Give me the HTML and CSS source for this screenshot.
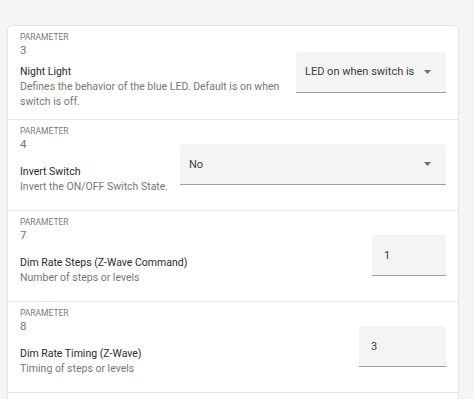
FILE: index.html
```html
<!DOCTYPE html>
<html>
<head>
<meta charset="utf-8">
<link rel="stylesheet" href="styles.css">
</head>
<body>
<div class="page">
  <div class="card">
    <div class="row">
      <div class="info">
        <div class="label">Parameter</div>
        <div class="num">3</div>
        <div class="body">
          <div class="title">Night Light</div>
          <div class="desc">Defines the behavior of the blue LED. Default is on when switch is off.</div>
        </div>
      </div>
      <div class="field select sel-led">
        <span class="value">LED on when switch is</span>
        <svg class="arrow" width="7" height="4" viewBox="0 0 7 4"><path d="M0 0 L7 0 L3.5 4 Z" fill="#6e6e6e"/></svg>
      </div>
    </div>
    <div class="row">
      <div class="info">
        <div class="label">Parameter</div>
        <div class="num">4</div>
        <div class="body">
          <div class="title">Invert Switch</div>
          <div class="desc">Invert the ON/OFF Switch State.</div>
        </div>
      </div>
      <div class="field select sel-no">
        <span class="value">No</span>
        <svg class="arrow" width="7" height="4" viewBox="0 0 7 4"><path d="M0 0 L7 0 L3.5 4 Z" fill="#6e6e6e"/></svg>
      </div>
    </div>
    <div class="row">
      <div class="info">
        <div class="label">Parameter</div>
        <div class="num">7</div>
        <div class="body">
          <div class="title">Dim Rate Steps (Z-Wave Command)</div>
          <div class="desc">Number of steps or levels</div>
        </div>
      </div>
      <div class="field input in-small">
        <span class="value">1</span>
      </div>
    </div>
    <div class="row">
      <div class="info">
        <div class="label">Parameter</div>
        <div class="num">8</div>
        <div class="body">
          <div class="title">Dim Rate Timing (Z-Wave)</div>
          <div class="desc">Timing of steps or levels</div>
        </div>
      </div>
      <div class="field input in-wide">
        <span class="value">3</span>
      </div>
    </div>
    <div class="spacer"></div>
  </div>
</div>
</body>
</html>
```

FILE: styles.css
```css
html, body {
  margin: 0;
  padding: 0;
  background: #f5f5f5;
  font-family: Roboto, "Noto Sans", Arial, sans-serif;
  overflow: hidden;
}
.page {
  padding: 25px 15px 0 7px;
  height: 399px;
  box-sizing: border-box;
  overflow: hidden;
}
.card {
  background: #fff;
  border: 1px solid #e4e4e4;
  border-radius: 5px 5px 0 0;
  width: 452px;
  box-sizing: border-box;
}
.row {
  display: flex;
  align-items: center;
  padding: 5px 12px 10px 12px;
  border-bottom: 1px solid #e6e6e6;
}
.spacer {
  height: 20px;
}
.info {
  flex: 1;
  min-width: 0;
}
.label {
  font-size: 8.5px;
  line-height: 12px;
  text-transform: uppercase;
  color: #7a7a7a;
}
.num {
  font-size: 11.5px;
  line-height: 15px;
  color: #737373;
}
.body {
  margin-top: 6px;
  min-height: 42px;
  display: flex;
  flex-direction: column;
  justify-content: center;
}
.title {
  font-size: 10.5px;
  line-height: 15px;
  color: #2a2a2a;
}
.desc {
  font-size: 10.5px;
  line-height: 15px;
  color: #777;
}
.field {
  margin-top: 4px;
  height: 41px;
  box-sizing: border-box;
  background: #f4f4f4;
  border-bottom: 1px solid #a0a0a0;
  border-radius: 3px 3px 0 0;
  display: flex;
  align-items: center;
  flex-shrink: 0;
}
.value {
  font-size: 11px;
  color: #3c3c3c;
  flex: 1;
  white-space: nowrap;
  overflow: hidden;
}
.select {
  padding: 0 15px 0 9px;
}
.sel-led {
  width: 150px;
  margin-left: 14px;
}
.sel-no {
  width: 266px;
  margin-left: 0;
}
.arrow {
  flex-shrink: 0;
  margin-left: 8px;
}
.input {
  padding: 0 12px;
}
.in-small {
  width: 74px;
}
.in-wide {
  width: 87px;
}
```
